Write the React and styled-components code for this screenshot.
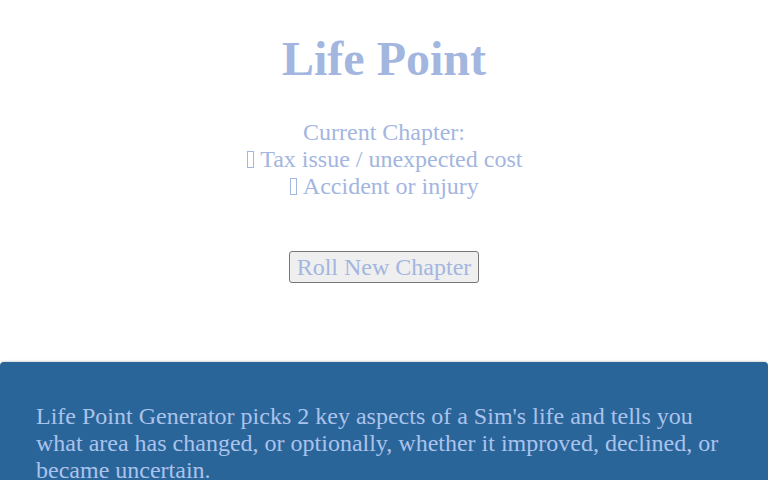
import React, { useState } from 'react';
import styled, { createGlobalStyle } from 'styled-components';

const GlobalStyle = createGlobalStyle`
  body {
    margin: 0;
    background: #ffffff;
    font-family: "Liberation Serif", "Times New Roman", serif;
  }
`;

const Page = styled.div`
  display: flex;
  flex-direction: column;
  align-items: center;
  min-height: 480px;
`;

const Title = styled.h1`
  margin: 31px 0 0;
  font-size: 48px;
  font-weight: bold;
  color: #a3b6df;
  line-height: 55px;
`;

const Chapter = styled.div`
  margin-top: 33px;
  font-size: 24px;
  line-height: 27px;
  color: #a3b6df;
  text-align: center;
`;

const Line = styled.div``;

/* missing-glyph box, as the emoji shows up in the reference */
const Glyph = styled.span`
  display: inline-block;
  width: 5px;
  height: 15px;
  margin: 0 1px;
  border: 1px solid #a3b6df;
  vertical-align: -1px;
`;

const RollButton = styled.button`
  margin-top: 51px;
  padding: 1px 7px;
  font-family: "Liberation Serif", "Times New Roman", serif;
  font-size: 24px;
  line-height: 28px;
  color: #a3b6df;
  background: #efefef;
  border: 1px solid #767676;
  border-radius: 3px;
`;

const Info = styled.section`
  align-self: stretch;
  margin-top: 79px;
  padding: 41px 36px 40px;
  background: #2a6599;
  border-radius: 4px 4px 0 0;
  box-shadow: 0 -1px 2px rgba(0, 0, 0, 0.15);
  color: #aac3ec;
  font-size: 24px;
  line-height: 27px;
`;

const chapters = ['Tax issue / unexpected cost', 'Accident or injury'];

export default function App() {
  const [current] = useState(chapters);
  return (
    <Page>
      <GlobalStyle />
      <Title>Life Point</Title>
      <Chapter>
        <Line>Current Chapter:</Line>
        {current.map((text) => (
          <Line key={text}>
            <Glyph /> {text}
          </Line>
        ))}
      </Chapter>
      <RollButton>Roll New Chapter</RollButton>
      <Info>
        Life Point Generator picks 2 key aspects of a Sim's life and tells you
        what area has changed, or optionally, whether it improved, declined, or
        became uncertain.
      </Info>
    </Page>
  );
}
